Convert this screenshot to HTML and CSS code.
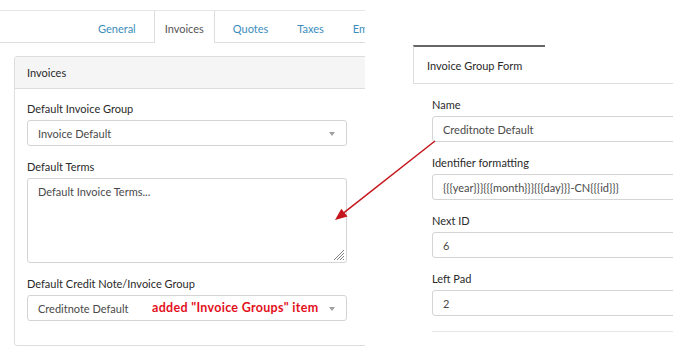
FILE: index.html
```html
<!DOCTYPE html>
<html lang="en">
<head>
<meta charset="utf-8">
<title>Invoice settings</title>
<link rel="stylesheet" href="styles.css">
</head>
<body>
<div class="canvas">
  <section class="shot shot-left">
    <nav class="tabs">
      <a class="tab">General</a>
      <a class="tab active">Invoices</a>
      <a class="tab">Quotes</a>
      <a class="tab">Taxes</a>
      <a class="tab">Email</a>
    </nav>
    <div class="panel">
      <div class="panel-heading">Invoices</div>
      <div class="panel-body">
        <div class="col">
          <div class="group">
            <label class="label">Default Invoice Group</label>
            <div class="control select"><span>Invoice Default</span><i class="caret"></i></div>
          </div>
          <div class="group">
            <label class="label">Default Terms</label>
            <div class="control textarea"><span class="placeholder">Default Invoice Terms...</span>
              <svg class="grip" width="12" height="12" viewBox="0 0 12 12"><path d="M11 1L1 11M11 4L4 11M11 7L7 11M11 10L10 11" stroke="#777" stroke-width="0.9" fill="none"/></svg>
            </div>
          </div>
          <div class="group">
            <label class="label">Default Credit Note/Invoice Group</label>
            <div class="control select"><span>Creditnote Default</span><i class="caret"></i>
              <span class="note">added "Invoice Groups" item</span>
            </div>
          </div>
        </div>
      </div>
    </div>
  </section>

  <section class="shot shot-right">
    <div class="form-head">
      <div class="form-tab">Invoice Group Form</div>
    </div>
    <div class="form-body">
      <div class="group">
        <label class="label">Name</label>
        <div class="control wide"><span>Creditnote Default</span></div>
      </div>
      <div class="group">
        <label class="label">Identifier formatting</label>
        <div class="control wide"><span>{{{year}}}{{{month}}}{{{day}}}-CN{{{id}}}</span></div>
      </div>
      <div class="group">
        <label class="label">Next ID</label>
        <div class="control wide"><span>6</span></div>
      </div>
      <div class="group">
        <label class="label">Left Pad</label>
        <div class="control wide"><span>2</span></div>
      </div>
      <hr class="rule">
    </div>
  </section>

  <svg class="arrow" width="690" height="354" viewBox="0 0 690 354">
    <line x1="435" y1="141" x2="344" y2="212.6" stroke="#c4161c" stroke-width="1.5"/>
    <polygon points="335,220 347.5,216.5 341.3,208.7" fill="#c4161c"/>
  </svg>
</div>
</body>
</html>
```
FILE: styles.css
```css
* { box-sizing: border-box; }
html, body { margin: 0; padding: 0; background: #fff; }
body {
  font-family: Lato, "Open Sans", "DejaVu Sans", sans-serif;
  font-size: 11px;
  color: #2a2a2a;
  width: 690px;
  height: 354px;
  overflow: hidden;
}
.canvas { position: relative; display: flex; align-items: flex-start; width: 690px; height: 354px; }
.shot { flex: none; overflow: hidden; }
.shot-left { width: 365px; height: 354px; }
.shot-right { width: 260px; margin-left: 48px; height: 354px; }

/* tabs */
.tabs {
  display: flex;
  margin-top: 10px;
  height: 33px;
  border-top: 1px solid #e6e6e6;
  border-bottom: 1px solid #ddd;
  padding-left: 87px;
}
.tab {
  display: flex;
  align-items: center;
  padding: 3px 11px 0;
  margin-right: 7px;
  color: #3c8dbc;
  white-space: nowrap;
  flex: none;
}
.tab.active {
  color: #555;
  background: #fff;
  border-left: 1px solid #ddd;
  border-right: 1px solid #ddd;
  margin-bottom: -1px;
  padding: 3px 10px 0 10px;
}

/* panel */
.panel {
  margin: 13px 0 0 14px;
  width: 380px;
  border: 1px solid #ddd;
  border-radius: 3px;
}
.panel-heading {
  height: 32px;
  background: #f5f5f5;
  border-bottom: 1px solid #ddd;
  padding: 0 12px;
  display: flex;
  align-items: center;
  border-radius: 3px 3px 0 0;
}
.panel-body { padding: 12px 12px 24px; }
.col { width: 320px; }

.group { margin-bottom: 13px; }
.group:last-child { margin-bottom: 0; }
.label { display: block; height: 16px; line-height: 16px; margin-bottom: 3px; color: #2a2a2a; }

.control {
  position: relative;
  height: 26px;
  border: 1px solid #d4d4d4;
  border-radius: 3px;
  padding: 0 10px;
  display: flex;
  align-items: center;
  color: #4a4a4a;
  white-space: nowrap;
}
.select .caret {
  position: absolute;
  right: 11px;
  top: 11px;
  width: 0;
  height: 0;
  border-left: 3px solid transparent;
  border-right: 3px solid transparent;
  border-top: 4px solid #a0a0a0;
}
.textarea {
  height: 85px;
  align-items: flex-start;
  padding-top: 6px;
}
.textarea .grip { position: absolute; right: 1px; bottom: 1px; }
.note {
  position: absolute;
  left: 124px;
  top: 4px;
  color: #e3101c;
  font-weight: bold;
  font-size: 12.5px;
  letter-spacing: 0.3px;
}

/* right form */
.form-head {
  margin-top: 45px;
  height: 39px;
  border-bottom: 1px solid #ddd;
  display: flex;
}
.form-tab {
  width: 132px;
  border-top: 2px solid #666;
  border-left: 1px solid #ddd;
  padding-left: 13px;
  display: flex;
  align-items: center;
}
.form-body { padding: 13px 0 0 19px; width: 320px; }
.form-body .group:last-of-type { margin-bottom: 0; }
.wide { width: 300px; }
.rule { margin: 15px 0 0; border: 0; border-top: 1px solid #e5e5e5; height: 0; }

.arrow { position: absolute; left: 0; top: 0; pointer-events: none; }
```
